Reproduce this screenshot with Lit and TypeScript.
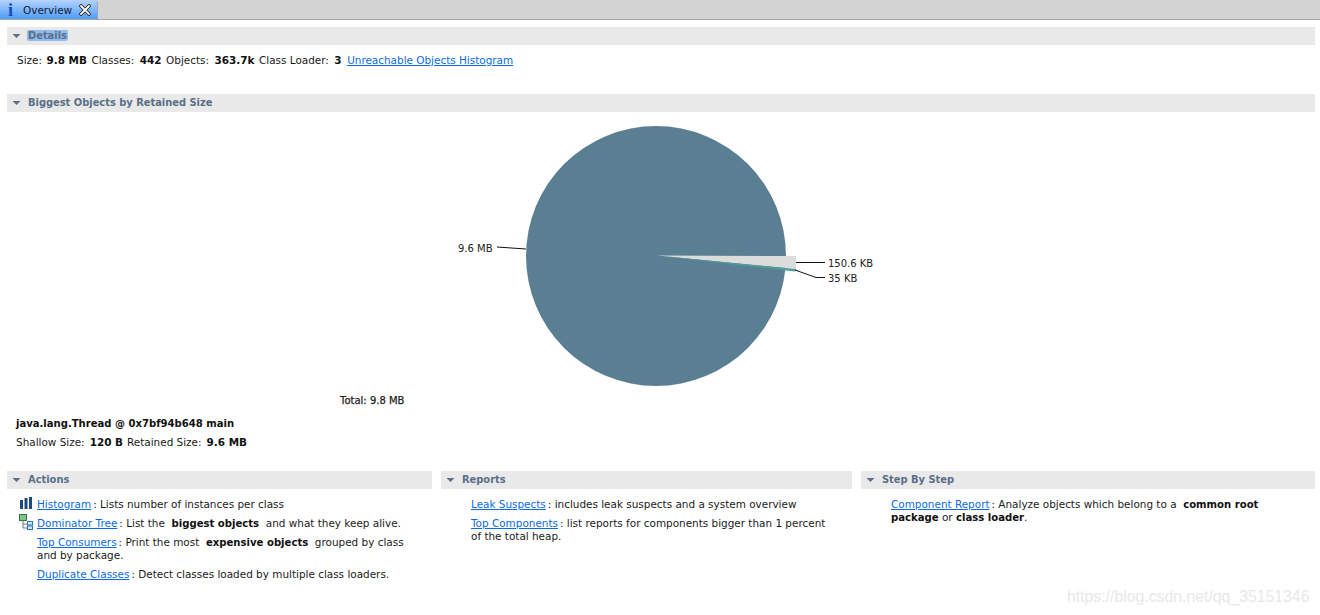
import { LitElement, html, css, svg } from "lit";
import { customElement } from "lit/decorators.js";

const FONT = `"DejaVu Sans", "Liberation Sans", sans-serif`;

@customElement("app-root")
export class AppRoot extends LitElement {
  static styles = css`
    :host { display: block; width: 1320px; height: 615px; position: relative; overflow: hidden; background: #fff;
      font-family: "DejaVu Sans", "Liberation Sans", sans-serif; font-size: 10.45px; color: #1a1a1a; }
    * { box-sizing: border-box; }
    .tabbar { height: 20px; background: #d3d3d3; border-bottom: 1px solid #a8a8a8; display: flex; }
    .tab { width: 98px; height: 19px; background: linear-gradient(#b4d3fb, #4f9bf7); border-right: 1px solid #8ba9cf; border-top-right-radius: 4px;
      display: flex; align-items: center; color: #10213a; font-size: 10.45px; }
    .tab .i { width: 23px; padding-left: 8px; flex: none; font-family: "Liberation Serif", serif; font-weight: 700; font-size: 18px; color: #0f4fb0; line-height: 1; }
    .tab .x { margin-left: 7px; display: flex; }
    .body { padding: 7px 5px 0 7px; }
    .head { height: 18px; background: #e9e9e9; display: flex; align-items: center; color: #5a6f88; font-weight: 700; font-size: 9.9px; padding: 0 0 2px 5px; }
    .head svg { flex: none; margin: 2px 6px 0 0; }
    .sel { background: #8fbcee; border-radius: 2px; padding: 0 1px; margin-left: -1px; }
    .line { display: flex; align-items: baseline; white-space: pre; }
    .line span { margin-right: 5px; }
    .line b { margin-right: 4px; }
    .details { padding: 9px 0 0 10px; height: 49px; }
    .details span { margin-right: 5.5px; }
    .details span:first-child { margin-right: 4.5px; }
    .details b { margin-right: 4.5px; }
    .details .last { margin-right: 5.5px; }
    b { font-weight: 700; color: #111; }
    a { color: #0b6be0; text-decoration: underline; }
    .c { margin-left: 2px; }
    .chart { display: block; margin-left: -7px; }
    .info { padding: 0 0 0 9px; height: 54px; }
    .title { font-weight: 700; font-size: 10.05px; color: #111; margin-bottom: 6px; line-height: 13px; }
    .info .line { line-height: 13px; }
    .cols { display: grid; grid-template-columns: 425px 411px 454px; column-gap: 9px; }
    .list { padding: 9px 20px 0 30px; position: relative; }
    .list p { margin: 0 0 6px; line-height: 13px; }
    .list b { font-size: 10.1px; }
    .ico { position: absolute; }
    .mark { position: absolute; left: 1067px; top: 588px; font-family: "Liberation Sans", sans-serif; font-size: 15.8px; color: #e8e8e8; white-space: nowrap; }
  `;

  head(t: unknown) {
    return html`<div class="head"><svg width="10" height="6" viewBox="0 0 10 6"><path d="M0.5 1h8l-4 4z" fill="#5a6f88"/></svg><span>${t}</span></div>`;
  }

  chart() {
    const t = `font-family:${FONT};font-size:10px;fill:#222`;
    return svg`
      <circle cx="656" cy="144" r="130" fill="#5b7f92"/>
      <path d="M657 143.5 L796 144 L796 157 Z" fill="#dcdcdc"/>
      <path d="M657 143.5 L796 157 L795 159.5 Z" fill="#4f9c98"/>
      <path d="M497 135 L526 137" stroke="#111" fill="none"/>
      <path d="M796 150.5 H825" stroke="#111" fill="none"/>
      <path d="M795 158 L816 165.5 H825" stroke="#111" fill="none"/>
      <text x="458" y="140" style=${t}>9.6 MB</text>
      <text x="828" y="155" style=${t}>150.6 KB</text>
      <text x="828" y="170" style=${t}>35 KB</text>
      <text x="340" y="292" style="font-family:${FONT};font-size:10px;fill:#222;stroke:#222;stroke-width:.25">Total: 9.8 MB</text>`;
  }

  render() {
    return html`
      <div class="tabbar"><div class="tab"><span class="i">i</span><span>Overview</span><span class="x">
        <svg width="12" height="12" viewBox="0 0 12 12"><path d="M2 2 L10 10 M10 2 L2 10" stroke="#222" stroke-width="3.6" stroke-linecap="round"/><path d="M2 2 L10 10 M10 2 L2 10" stroke="#fff" stroke-width="1.8" stroke-linecap="round"/></svg>
      </span></div></div>
      <div class="body">
        ${this.head(html`<span class="sel">Details</span>`)}
        <div class="details"><div class="line"><span>Size:</span><b>9.8 MB</b><span>Classes:</span><b>442</b><span>Objects:</span><b>363.7k</b><span>Class Loader:</span><b class="last">3</b><a>Unreachable Objects Histogram</a></div></div>
        ${this.head("Biggest Objects by Retained Size")}
        <svg class="chart" width="1320" height="305">${this.chart()}</svg>
        <div class="info">
          <div class="title">java.lang.Thread @ 0x7bf94b648 main</div>
          <div class="line"><span>Shallow Size:</span><b>120 B</b><span>Retained Size:</span><b>9.6 MB</b></div>
        </div>
        <div class="cols">
          <div>
            ${this.head("Actions")}
            <div class="list">
              <svg class="ico" style="left:13px;top:8px" width="12" height="12" viewBox="0 0 12 12"><path d="M0 3h3v9H0zM4.5 1h3v11h-3zM9 0h3v12H9z" fill="#1f4a80"/></svg>
              <svg class="ico" style="left:12px;top:25px" width="14" height="16" viewBox="0 0 14 16"><rect x=".5" y=".5" width="7" height="6" fill="#7cc48a" stroke="#2f7a44"/><path d="M4 7v7h4M4 10h4" stroke="#777" fill="none"/><rect x="8.5" y="7.5" width="5" height="3.5" fill="#cfe3fa" stroke="#2f74c0"/><rect x="8.5" y="12" width="5" height="3.5" fill="#cfe3fa" stroke="#2f74c0"/></svg>
              <p><a>Histogram</a><span class="c">: Lists number of instances per class</span></p>
              <p><a>Dominator Tree</a><span class="c">: List the &nbsp;<b>biggest objects</b>&nbsp; and what they keep alive.</span></p>
              <p><a>Top Consumers</a><span class="c">: Print the most &nbsp;<b>expensive objects</b>&nbsp; grouped by class and by package.</span></p>
              <p><a>Duplicate Classes</a><span class="c">: Detect classes loaded by multiple class loaders.</span></p>
            </div>
          </div>
          <div>
            ${this.head("Reports")}
            <div class="list">
              <p><a>Leak Suspects</a><span class="c">: includes leak suspects and a system overview</span></p>
              <p><a>Top Components</a><span class="c">: list reports for components bigger than 1 percent of the total heap.</span></p>
            </div>
          </div>
          <div>
            ${this.head("Step By Step")}
            <div class="list">
              <p><a>Component Report</a><span class="c">: Analyze objects which belong to a &nbsp;<b>common root package</b> or <b>class loader</b>.</span></p>
            </div>
          </div>
        </div>
      </div>
      <div class="mark">https://blog.csdn.net/qq_35151346</div>
    `;
  }
}
